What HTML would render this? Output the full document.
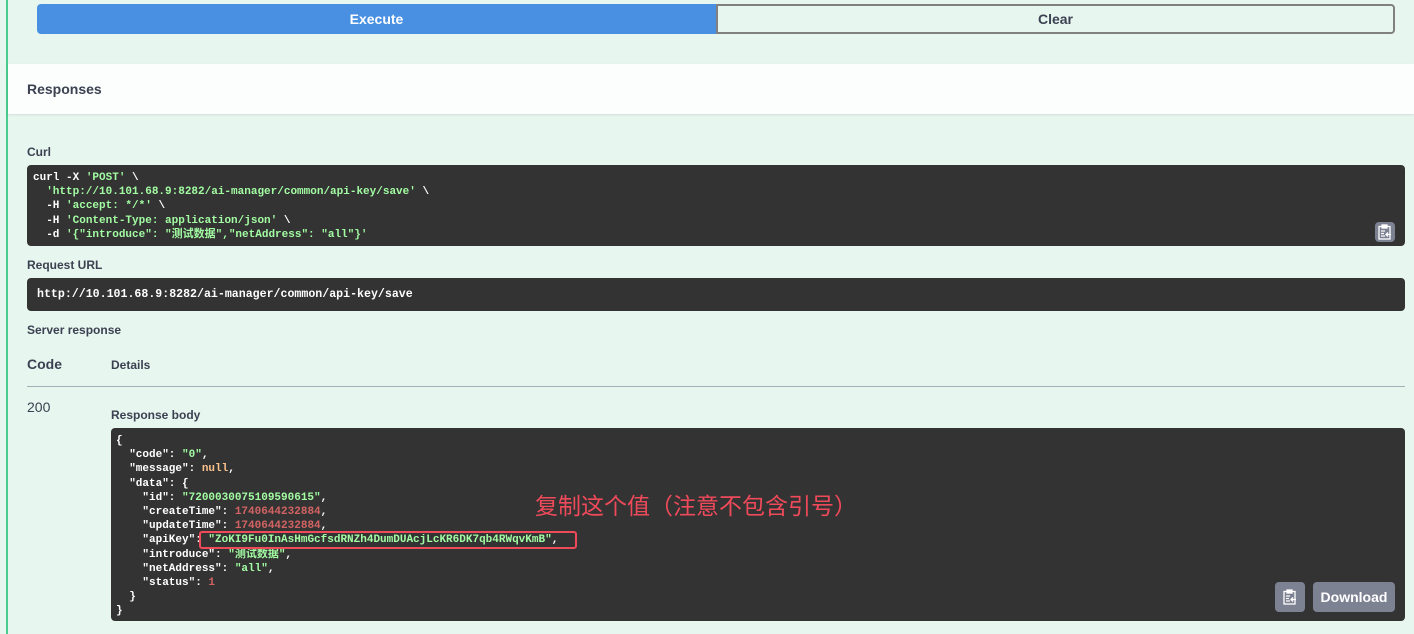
<!DOCTYPE html>
<html><head><meta charset="utf-8"><style>
*{box-sizing:border-box;margin:0;padding:0}
body{width:1414px;height:634px;overflow:hidden;background:#e8f6f0;font-family:"Liberation Sans","Noto Sans CJK SC",sans-serif;color:#3b4151;position:relative}
.abs{position:absolute}
.lbl{position:absolute;font-size:12px;font-weight:bold;color:#3b4151}
.box{position:absolute;background:#333;border-radius:4px}
pre{font-family:"Liberation Mono","Noto Sans CJK SC",monospace;font-size:11px;font-weight:bold;color:#fff;line-height:14.2px;white-space:pre}
.s{color:#a2fca2}.n{color:#d36363}.u{color:#fcc28c}
.icon{position:absolute;background:#7d8293;border-radius:4px;display:flex;align-items:center;justify-content:center}
</style></head><body>
<div class="abs" style="left:6px;top:0;width:2px;height:634px;background:#49cc90"></div>
<div class="abs" style="left:37px;top:4px;width:679px;height:30px;background:#4990e2;border-radius:4px 0 0 4px;color:#fff;font-weight:bold;font-size:14px;text-align:center;line-height:30px">Execute</div>
<div class="abs" style="left:716px;top:4px;width:679px;height:30px;border:2px solid #808080;border-radius:0 4px 4px 0;font-weight:bold;font-size:14px;text-align:center;line-height:26px;color:#3b4151">Clear</div>
<div class="abs" style="left:8px;top:64px;width:1406px;height:50px;background:rgba(255,255,255,.85);box-shadow:0 1px 2px rgba(0,0,0,.1)"></div>
<div class="lbl" style="left:27px;top:81px;font-size:14px">Responses</div>
<div class="lbl" style="left:27px;top:145px">Curl</div>
<div class="box" style="left:27px;top:165px;width:1378px;height:81px"></div>
<pre class="abs" style="left:33px;top:171px">curl -X <span class="s">'POST'</span> \
  <span class="s">'http://10.101.68.9:8282/ai-manager/common/api-key/save'</span> \
  -H <span class="s">'accept: */*'</span> \
  -H <span class="s">'Content-Type: application/json'</span> \
  -d <span class="s">'{"introduce": "测试数据","netAddress": "all"}'</span></pre>
<div class="icon" style="left:1375px;top:222px;width:20px;height:20px"><svg width="14" height="16" viewBox="0 0 14 16" fill="none" stroke="#fff" stroke-width="1.3"><rect x="1" y="2.5" width="11" height="12.5"/><rect x="4" y="1" width="5" height="3" fill="#fff"/><path d="M3 7h4M3 9.5h3M3 12h4M13 10.5H8M10 8.5l-2 2 2 2"/></svg></div>
<div class="lbl" style="left:27px;top:258px">Request URL</div>
<div class="box" style="left:27px;top:278px;width:1378px;height:33px"></div>
<div class="abs" style="left:37px;top:288px;font-family:'Liberation Mono',monospace;font-weight:bold;font-size:11.6px;color:#fff">http://10.101.68.9:8282/ai-manager/common/api-key/save</div>
<div class="lbl" style="left:27px;top:323px">Server response</div>
<div class="lbl" style="left:27px;top:356px;font-size:14px">Code</div>
<div class="lbl" style="left:111px;top:358px">Details</div>
<div class="abs" style="left:27px;top:386px;width:1378px;height:1px;background:#a8aeb5"></div>
<div class="abs" style="left:27px;top:399px;font-size:14px">200</div>
<div class="lbl" style="left:111px;top:408px">Response body</div>
<div class="box" style="left:111px;top:428px;width:1294px;height:193px"></div>
<pre class="abs" style="left:116px;top:434px">{
  "code": <span class="s">"0"</span>,
  "message": <span class="u">null</span>,
  "data": {
    "id": <span class="s">"7200030075109590615"</span>,
    "createTime": <span class="n">1740644232884</span>,
    "updateTime": <span class="n">1740644232884</span>,
    "apiKey": <span class="s">"ZoKI9Fu0InAsHmGcfsdRNZh4DumDUAcjLcKR6DK7qb4RWqvKmB"</span>,
    "introduce": <span class="s">"测试数据"</span>,
    "netAddress": <span class="s">"all"</span>,
    "status": <span class="n">1</span>
  }
}</pre>
<div class="abs" style="left:199px;top:531px;width:378px;height:18px;border:2px solid #ef4a5a;border-radius:3px"></div>
<div class="abs" style="left:535px;top:487px;font-size:23px;color:#ef4a5a;font-family:'Noto Sans CJK SC',sans-serif">复制这个值（注意不包含引号）</div>
<div class="icon" style="left:1275px;top:582px;width:30px;height:30px"><svg width="14" height="16" viewBox="0 0 14 16" fill="none" stroke="#fff" stroke-width="1.3"><rect x="1" y="2.5" width="11" height="12.5"/><rect x="4" y="1" width="5" height="3" fill="#fff"/><path d="M3 7h4M3 9.5h3M3 12h4M13 10.5H8M10 8.5l-2 2 2 2"/></svg></div>
<div class="icon" style="left:1313px;top:582px;width:82px;height:30px;color:#fff;font-weight:bold;font-size:14px">Download</div>
</body></html>
